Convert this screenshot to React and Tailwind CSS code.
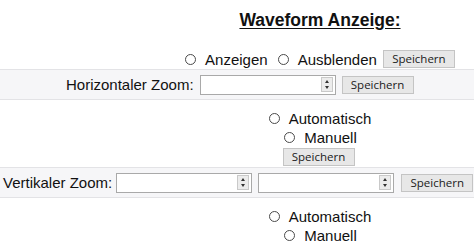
import React from 'react';

const font = { fontFamily: '"Liberation Sans", Arial, sans-serif' };

function Radio({ label, name }) {
  return (
    <label className="flex items-center h-[19px]">
      <input
        type="radio"
        name={name}
        className="appearance-none w-[11px] h-[11px] rounded-full border border-[#4a4a4a] bg-white m-0"
      />
      <span className="ml-[9px] text-[15px] leading-[17px] text-[#111]">{label}</span>
    </label>
  );
}

function SaveButton({ className = '' }) {
  return (
    <button
      className={`h-[18px] w-[72px] border border-[#c4c4c4] bg-[#e7e7e7] text-[11.5px] leading-none text-[#1a1a1a] font-['Open_Sans',sans-serif] ${className}`}
    >
      Speichern
    </button>
  );
}

function NumberInput({ className = '' }) {
  return (
    <div
      className={`h-[20px] w-[136px] border border-[#a9a9a9] bg-white flex items-center justify-end pr-[2px] ${className}`}
    >
      <div className="w-[12px] h-[15px] border border-[#c9c9c9] bg-[#ececec] flex flex-col items-center justify-center gap-[3px]">
        <span className="block w-0 h-0 border-l-[2.5px] border-r-[2.5px] border-b-[3px] border-l-transparent border-r-transparent border-b-[#333]" />
        <span className="block w-0 h-0 border-l-[2.5px] border-r-[2.5px] border-t-[3px] border-l-transparent border-r-transparent border-t-[#333]" />
      </div>
    </div>
  );
}

export default function App() {
  return (
    <div className="w-[474px] h-[242px] overflow-hidden bg-white text-[#111]" style={font}>
      {/* heading */}
      <div className="pt-[10px] pl-[166px] flex justify-center">
        <h2 className="text-[17.5px] leading-[20px] font-bold underline underline-offset-[2px]">
          Waveform Anzeige:
        </h2>
      </div>

      {/* show / hide */}
      <div className="mt-[20px] mb-[1px] pl-[166px] flex justify-center items-center h-[18px]">
        <Radio name="show" label="Anzeigen" />
        <div className="ml-[10px]">
          <Radio name="show" label="Ausblenden" />
        </div>
        <SaveButton className="ml-[6px]" />
      </div>

      {/* horizontal zoom */}
      <div className="h-[31px] bg-[#f6f6f8] border-y border-[#e3e3e6] flex items-center pl-[66px]">
        <span className="text-[15px] leading-[17px]">Horizontaler Zoom:</span>
        <NumberInput className="ml-[6px]" />
        <SaveButton className="ml-[6px]" />
      </div>

      <div className="pt-[9px] pb-[1px] pl-[166px] flex flex-col items-center">
        <Radio name="hz" label="Automatisch" />
        <div className="pl-[1px]">
          <Radio name="hz" label="Manuell" />
        </div>
        <SaveButton className="mt-[1px] -ml-[3px]" />
      </div>

      {/* vertical zoom */}
      <div className="h-[31px] bg-[#f6f6f8] border-y border-[#e3e3e6] flex items-center pl-[3px]">
        <span className="text-[15px] leading-[17px] whitespace-nowrap">Vertikaler Zoom:</span>
        <NumberInput className="ml-[4px] shrink-0" />
        <NumberInput className="ml-[6px] shrink-0" />
        <SaveButton className="ml-[7px] shrink-0" />
      </div>

      <div className="pt-[9px] pl-[166px] flex flex-col items-center">
        <Radio name="vz" label="Automatisch" />
        <div className="pl-[1px]">
          <Radio name="vz" label="Manuell" />
        </div>
      </div>
    </div>
  );
}
